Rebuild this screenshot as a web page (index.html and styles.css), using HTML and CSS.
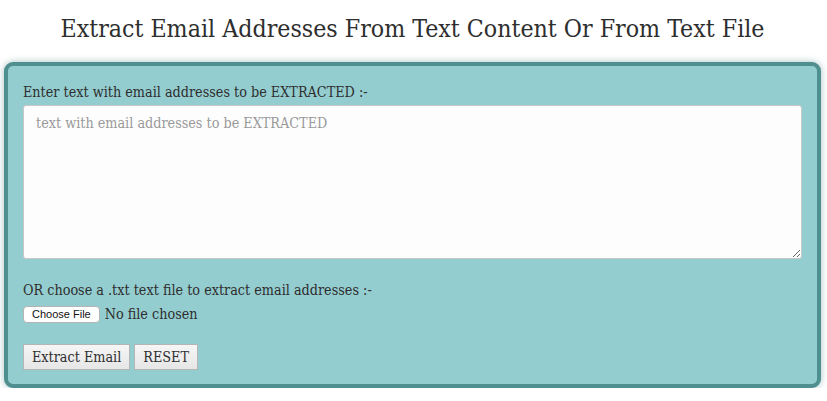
FILE: index.html
```html
<!DOCTYPE html>
<html>
<head>
<meta charset="utf-8">
<link rel="stylesheet" href="styles.css">
</head>
<body>
<h1 class="title">Extract Email Addresses From Text Content Or From Text File</h1>
<form class="panel">
  <label class="label" for="txt">Enter text with email addresses to be EXTRACTED :-</label>
  <textarea id="txt" class="area" placeholder="text with email addresses to be EXTRACTED"></textarea>
  <div class="label label-file">OR choose a .txt text file to extract email addresses :-</div>
  <div class="file-row">
    <span class="choose">Choose File</span>
    <span class="nofile">No file chosen</span>
  </div>
  <div class="actions">
    <button type="button" class="btn">Extract Email</button>
    <button type="button" class="btn">RESET</button>
  </div>
</form>
</body>
</html>
```
FILE: styles.css
```css
html, body {
  margin: 0;
  padding: 0;
  background: #ffffff;
}
body {
  font-family: "DejaVu Serif Condensed", "DejaVu Serif", serif;
  color: #2e2e2e;
  padding: 0 6px 0 4px;
}
.title {
  margin: 0;
  padding-top: 14px;
  height: 62px;
  box-sizing: border-box;
  text-align: center;
  font-weight: normal;
  font-size: 24.7px;
  line-height: 30px;
  color: #2e2e2e;
}
.panel {
  display: flex;
  flex-direction: column;
  background: #94cdcf;
  border: 4px solid #4f8f8f;
  border-radius: 9px;
  box-shadow: 0 0 7px rgba(60, 120, 120, 0.45);
  padding: 16px 15px 14px 15px;
  box-sizing: border-box;
}
.label {
  font-size: 14.25px;
  line-height: 20px;
  color: #2e2e2e;
  margin-bottom: 3px;
}
.area {
  display: block;
  width: 100%;
  height: 154px;
  box-sizing: border-box;
  border: 1px solid #c8c8c8;
  border-radius: 3px;
  background: #fdfdfd;
  padding: 7px 12px;
  font-family: inherit;
  font-size: 14.25px;
  line-height: 20px;
  color: #333;
  resize: vertical;
}
.area::placeholder {
  color: #999999;
}
.label-file {
  margin-top: 21px;
  margin-bottom: 2px;
}
.file-row {
  display: flex;
  align-items: center;
  gap: 5px;
  height: 24px;
}
.choose {
  display: inline-block;
  font-family: "Liberation Sans", Arial, sans-serif;
  font-size: 11px;
  line-height: 15px;
  padding: 0 8px;
  background: #ffffff;
  border: 1px solid #b4b4b4;
  border-radius: 4px;
  color: #111;
}
.nofile {
  font-size: 14.25px;
  color: #2e2e2e;
}
.actions {
  display: flex;
  gap: 4px;
  margin-top: 18px;
}
.btn {
  font-family: inherit;
  font-size: 14.25px;
  color: #2e2e2e;
  height: 26px;
  padding: 0 8px;
  background: linear-gradient(#f6f6f6, #e6e6e6);
  border: 1px solid #b5b5b5;
  border-radius: 0;
}
```
